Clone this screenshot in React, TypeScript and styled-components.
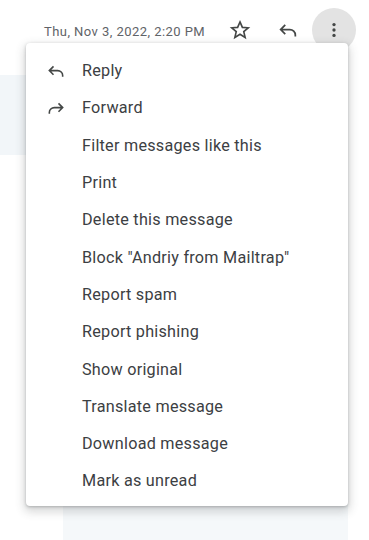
import styled, { createGlobalStyle } from 'styled-components';

const GlobalStyle = createGlobalStyle`
    html, body {
        margin: 0;
        padding: 0;
        background: #ffffff;
    }
    body {
        font-family: Roboto, 'Liberation Sans', Arial, sans-serif;
        -webkit-font-smoothing: antialiased;
    }
`;

interface MenuEntry {
    label: string;
    icon?: 'reply' | 'forward';
}

const menuItems: MenuEntry[] = [
    { label: 'Reply', icon: 'reply' },
    { label: 'Forward', icon: 'forward' },
    { label: 'Filter messages like this' },
    { label: 'Print' },
    { label: 'Delete this message' },
    { label: 'Block "Andriy from Mailtrap"' },
    { label: 'Report spam' },
    { label: 'Report phishing' },
    { label: 'Show original' },
    { label: 'Translate message' },
    { label: 'Download message' },
    { label: 'Mark as unread' },
];

// 아이콘들 (머티리얼 아웃라인 느낌으로 직접 그림)
const ReplyIcon = ({ size = 20 }: { size?: number }) => (
    <svg width={size} height={size} viewBox="0 0 24 24" fill="none">
        <path
            d="M9 6.5 L4 11.5 L9 16.5 M4 11.5 H14 a6 6 0 0 1 6 6 V19"
            stroke="currentColor"
            strokeWidth="1.9"
        />
    </svg>
);

const ForwardIcon = ({ size = 20 }: { size?: number }) => (
    <svg width={size} height={size} viewBox="0 0 24 24" fill="none">
        <path
            d="M15 6.5 L20 11.5 L15 16.5 M20 11.5 H10 a6 6 0 0 0 -6 6 V19"
            stroke="currentColor"
            strokeWidth="1.9"
        />
    </svg>
);

const StarIcon = () => (
    <svg width="22" height="22" viewBox="0 0 24 24" fill="none">
        <path
            d="M12 3.2 L14.6 9.1 L21 9.6 L16.1 13.8 L17.6 20.1 L12 16.7 L6.4 20.1 L7.9 13.8 L3 9.6 L9.4 9.1 Z"
            stroke="currentColor"
            strokeWidth="1.8"
        />
    </svg>
);

const MoreIcon = () => (
    <svg width="20" height="20" viewBox="0 0 24 24" fill="currentColor">
        <circle cx="12" cy="5.5" r="2" />
        <circle cx="12" cy="12" r="2" />
        <circle cx="12" cy="18.5" r="2" />
    </svg>
);

function App() {
    return (
        <Page>
            <GlobalStyle />
            <HeaderBar>
                <DateText>Thu, Nov 3, 2022, 2:20 PM</DateText>
                <IconButton>
                    <StarIcon />
                </IconButton>
                <IconButton>
                    <ReplyIcon size={22} />
                </IconButton>
                <IconButton active>
                    <MoreIcon />
                </IconButton>
            </HeaderBar>

            <Body>
                <SidePanel />
                <BottomPanel />
            </Body>

            <Menu>
                {menuItems.map((item) => (
                    <MenuItem key={item.label}>
                        <MenuIconSlot>
                            {item.icon === 'reply' && <ReplyIcon />}
                            {item.icon === 'forward' && <ForwardIcon />}
                        </MenuIconSlot>
                        <MenuLabel>{item.label}</MenuLabel>
                    </MenuItem>
                ))}
            </Menu>
        </Page>
    );
}

const Page = styled.div`
    position: relative;
    width: 369px;
    height: 540px;
    overflow: hidden;
    background: #ffffff;
`;

const HeaderBar = styled.div`
    display: flex;
    align-items: center;
    height: 52px;
    padding: 8px 0 0 44px;
    box-sizing: border-box;
`;

const DateText = styled.span`
    font-size: 13px;
    color: #5f6368;
    letter-spacing: 0.45px;
    margin-right: 9px;
    margin-top: 2px;
`;

const IconButton = styled.div<{ active?: boolean }>`
    width: 44px;
    height: 44px;
    margin-left: ${({ active }) => (active ? '2px' : '4px')};
    border-radius: 50%;
    display: flex;
    align-items: center;
    justify-content: center;
    color: #444746;
    background: ${({ active }) => (active ? '#e3e3e3' : 'transparent')};
`;

const Body = styled.div`
    display: flex;
    flex-direction: column;
`;

const SidePanel = styled.div`
    margin-top: 23px;
    width: 120px;
    height: 80px;
    background: #f2f6f9;
`;

const BottomPanel = styled.div`
    margin: 338px 21px 0 63px;
    height: 120px;
    background: #f5f8fa;
`;

// 드롭다운 메뉴 (오버레이)
const Menu = styled.div`
    position: absolute;
    left: 26px;
    top: 43px;
    width: 322px;
    padding: 9px 0 6px;
    box-sizing: border-box;
    background: #ffffff;
    border-radius: 4px;
    box-shadow: 0 4px 10px 2px rgba(60, 64, 67, 0.2),
        0 1px 3px rgba(60, 64, 67, 0.3);
`;

const MenuItem = styled.div`
    display: flex;
    align-items: center;
    height: 37.3px;
    padding-left: 20px;
    color: #3c4043;
`;

const MenuIconSlot = styled.div`
    width: 36px;
    display: flex;
    align-items: center;
    color: #444746;
`;

const MenuLabel = styled.span`
    font-size: 16.2px;
    letter-spacing: 0.25px;
    white-space: nowrap;
`;

export default App;
